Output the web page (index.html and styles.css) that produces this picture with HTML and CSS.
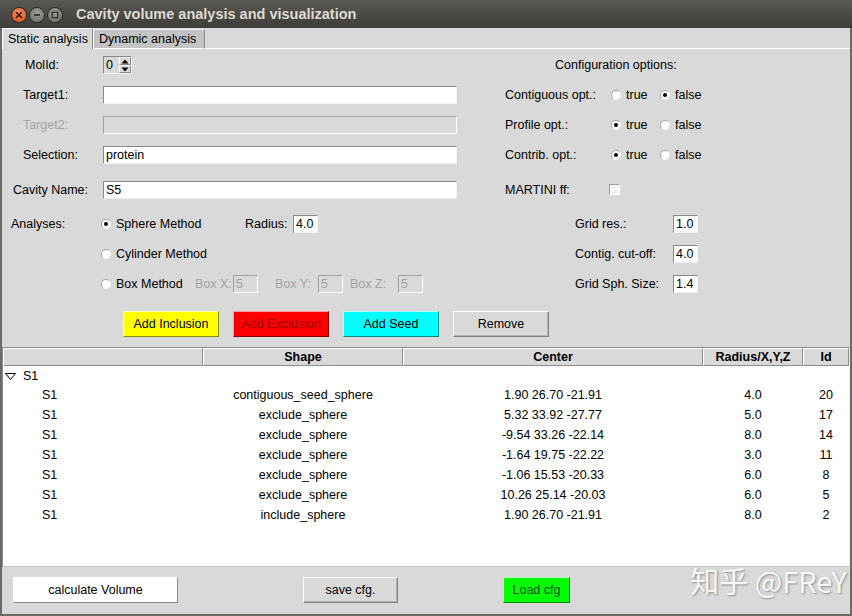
FILE: index.html
```html
<!DOCTYPE html>
<html>
<head>
<meta charset="utf-8">
<link rel="stylesheet" href="styles.css">
</head>
<body>
<div class="window">
  <div class="titlebar">
    <div class="wbtns">
      <span class="wb close"><svg width="14" height="14" viewBox="0 0 14 14"><path d="M4.6 4.6L9.4 9.4M9.4 4.6L4.6 9.4" stroke="#3a1a0c" stroke-width="1.6" stroke-linecap="round"/></svg></span>
      <span class="wb"><svg width="14" height="14" viewBox="0 0 14 14"><path d="M4 7H10" stroke="#33322e" stroke-width="1.8"/></svg></span>
      <span class="wb"><svg width="14" height="14" viewBox="0 0 14 14"><rect x="4.3" y="4.3" width="5.4" height="5.4" fill="none" stroke="#33322e" stroke-width="1.3"/></svg></span>
    </div>
    <div class="title">Cavity volume analysis and visualization</div>
  </div>
  <div class="frame">
    <div class="tabs">
      <div class="tab active">Static analysis</div>
      <div class="tab">Dynamic analysis</div>
      <div class="tab-fill"></div>
    </div>
    <div class="form">
      <div class="left">
        <div class="row"><span class="lbl lp23">MolId:</span>
          <span class="spin"><span class="spin-val">0</span><span class="spin-arrows"><span class="arr"><svg width="8" height="5" viewBox="0 0 8 5"><path d="M4 0.5L7.5 4.5H0.5Z" fill="#000"/></svg></span><span class="arr"><svg width="8" height="5" viewBox="0 0 8 5"><path d="M0.5 0.5H7.5L4 4.5Z" fill="#000"/></svg></span></span></span>
        </div>
        <div class="row"><span class="lbl lp21">Target1:</span><span class="entry wide"></span></div>
        <div class="row"><span class="lbl lp21 disabled">Target2:</span><span class="entry wide off"></span></div>
        <div class="row"><span class="lbl lp21">Selection:</span><span class="entry wide">protein</span></div>
        <div class="row tall"><span class="lbl lp11">Cavity Name:</span><span class="entry wide">S5</span></div>
        <div class="row"><span class="lbl lp9">Analyses:</span>
          <span class="radio on w144"><span class="dot"></span>Sphere Method</span>
          <span class="sublbl w48">Radius:</span><span class="entry small">4.0</span>
        </div>
        <div class="row"><span class="lbl"></span><span class="radio"><span class="dot"></span>Cylinder Method</span></div>
        <div class="row"><span class="lbl"></span>
          <span class="radio w94"><span class="dot"></span>Box Method</span>
          <span class="sublbl disabled w38">Box X:</span><span class="entry small off">5</span>
          <span class="sublbl disabled w43 ml17">Box Y:</span><span class="entry small off">5</span>
          <span class="sublbl disabled w48 ml7">Box Z:</span><span class="entry small off">5</span>
        </div>
      </div>
      <div class="right">
        <div class="row"><span class="cfg-title">Configuration options:</span></div>
        <div class="row"><span class="rlbl">Contiguous opt.:</span><span class="radio w49"><span class="dot"></span>true</span><span class="radio on"><span class="dot"></span>false</span></div>
        <div class="row"><span class="rlbl">Profile opt.:</span><span class="radio on w49"><span class="dot"></span>true</span><span class="radio"><span class="dot"></span>false</span></div>
        <div class="row"><span class="rlbl">Contrib. opt.:</span><span class="radio on w49"><span class="dot"></span>true</span><span class="radio"><span class="dot"></span>false</span></div>
        <div class="row tall"><span class="rlbl w119">MARTINI ff:</span><span class="check"></span></div>
        <div class="row"><span class="glbl">Grid res.:</span><span class="entry small">1.0</span></div>
        <div class="row"><span class="glbl">Contig. cut-off:</span><span class="entry small">4.0</span></div>
        <div class="row"><span class="glbl">Grid Sph. Size:</span><span class="entry small">1.4</span></div>
      </div>
    </div>
    <div class="actions">
      <button class="btn yellow">Add Inclusion</button>
      <button class="btn red">Add Exclusion</button>
      <button class="btn cyan">Add Seed</button>
      <button class="btn">Remove</button>
    </div>
    <div class="table">
      <div class="thead">
        <div class="th c1"></div>
        <div class="th c2">Shape</div>
        <div class="th c3">Center</div>
        <div class="th c4">Radius/X,Y,Z</div>
        <div class="th c5">Id</div>
      </div>
      <div class="tbody">
        <div class="tree-row"><svg class="tri" width="11" height="7" viewBox="0 0 11 7"><path d="M0.5 0.5H10.5L5.5 6.5Z" fill="none" stroke="#000" stroke-width="1"/></svg><span>S1</span></div>
        <div class="tr"><div class="td c1 name">S1</div><div class="td c2">contiguous_seed_sphere</div><div class="td c3">1.90 26.70 -21.91</div><div class="td c4">4.0</div><div class="td c5">20</div></div>
        <div class="tr"><div class="td c1 name">S1</div><div class="td c2">exclude_sphere</div><div class="td c3">5.32 33.92 -27.77</div><div class="td c4">5.0</div><div class="td c5">17</div></div>
        <div class="tr"><div class="td c1 name">S1</div><div class="td c2">exclude_sphere</div><div class="td c3">-9.54 33.26 -22.14</div><div class="td c4">8.0</div><div class="td c5">14</div></div>
        <div class="tr"><div class="td c1 name">S1</div><div class="td c2">exclude_sphere</div><div class="td c3">-1.64 19.75 -22.22</div><div class="td c4">3.0</div><div class="td c5">11</div></div>
        <div class="tr"><div class="td c1 name">S1</div><div class="td c2">exclude_sphere</div><div class="td c3">-1.06 15.53 -20.33</div><div class="td c4">6.0</div><div class="td c5">8</div></div>
        <div class="tr"><div class="td c1 name">S1</div><div class="td c2">exclude_sphere</div><div class="td c3">10.26 25.14 -20.03</div><div class="td c4">6.0</div><div class="td c5">5</div></div>
        <div class="tr"><div class="td c1 name">S1</div><div class="td c2">include_sphere</div><div class="td c3">1.90 26.70 -21.91</div><div class="td c4">8.0</div><div class="td c5">2</div></div>
      </div>
    </div>
    <div class="footer">
      <button class="btn white calc">calculate Volume</button>
      <button class="btn save">save cfg.</button>
      <button class="btn green load">Load cfg</button>
    </div>
  </div>
  <div class="watermark">知乎 @FReY</div>
</div>
</body>
</html>
```
FILE: styles.css
```css
* { box-sizing: border-box; }
html, body { margin: 0; padding: 0; }
body {
  width: 852px; height: 616px; overflow: hidden;
  background: #3c3b37;
  font-family: "Liberation Sans", Arial, sans-serif;
  font-size: 12.5px; color: #000;
}
.window { width: 852px; height: 616px; display: flex; flex-direction: column; position: relative; }

.titlebar {
  height: 28px; flex: none; display: flex; align-items: center;
  background: linear-gradient(#5a5954, #3e3d39);
}
.wbtns { display: flex; gap: 4px; margin-left: 12px; margin-right: 14px; margin-top: 2px; }
.wb {
  width: 14px; height: 14px; border-radius: 50%;
  background: radial-gradient(circle at 50% 35%, #9a9994, #6f6e6a);
  box-shadow: 0 0 0 1px #2e2d2a;
  display: flex;
}
.wb.close { background: radial-gradient(circle at 50% 35%, #f6915f, #dc4c18); }
.title {
  color: #dfdbd2; font-weight: bold; font-size: 14.5px;
  font-family: "Liberation Sans", Arial, sans-serif;
}

.frame {
  flex: 1; display: flex; flex-direction: column;
  background: #d9d9d9;
  border-left: 2px solid #6a6a66; border-right: 2px solid #6a6a66; border-bottom: 2px solid #6a6a66;
}

.tabs { height: 21px; display: flex; align-items: flex-end; flex: none; }
.tab {
  height: 21px; padding: 0 5px; display: flex; align-items: center; white-space: nowrap;
  border-top: 1px solid #fff; border-left: 1px solid #fff; border-right: 1px solid #8a8a8a;
}
.tab.active { width: 91px; background: #d9d9d9; }
.tab:not(.active) {
  width: 112px; height: 20px; background: #c3c3c3;
  border-top-color: #f0f0f0; border-bottom: 1px solid #fff; padding-left: 5px;
}
.tab-fill { flex: 1; border-bottom: 1px solid #fff; }

.form { display: flex; margin-top: 1px; flex: none; }
.left { width: 488px; }
.right { flex: 1; }
.row { height: 30px; display: flex; align-items: center; }
.row.tall { height: 39px; }

.lbl { width: 99px; flex: none; white-space: nowrap; }
.lp23 { padding-left: 23px; }
.lp21 { padding-left: 21px; }
.lp11 { padding-left: 11px; }
.lp9 { padding-left: 9px; }
.disabled { color: #a3a3a3; }

.entry {
  height: 18px; background: #fff; line-height: 16px; padding: 0 2px;
  border: 1px solid; border-color: #8a8a8a #f2f2f2 #f2f2f2 #8a8a8a;
  white-space: nowrap; overflow: hidden;
}
.entry.wide { width: 354px; margin-left: 2px; }
.entry.small { width: 25px; }
.entry.off { background: #d9d9d9; color: #a3a3a3; border-color: #a0a0a0 #fff #fff #a0a0a0; }

.spin {
  margin-left: 2px; width: 29px; height: 18px; display: flex;
  border: 1px solid; border-color: #8a8a8a #f2f2f2 #f2f2f2 #8a8a8a; background: #d9d9d9;
}
.spin-val { flex: 1; background: #d9d9d9; line-height: 16px; padding-left: 2px; }
.spin-arrows { width: 12px; display: flex; flex-direction: column; }
.arr {
  flex: 1; display: flex; align-items: center; justify-content: center;
  border: 1px solid; border-color: #fff #8a8a8a #8a8a8a #fff; background: #d9d9d9;
}

.radio { display: inline-flex; align-items: center; white-space: nowrap; flex: none; }
.radio .dot {
  width: 10px; height: 10px; border-radius: 50%; background: #fff; margin-right: 5px; position: relative;
  border: 1px solid; border-color: #a6a6a6 #f4f4f4 #f4f4f4 #a6a6a6;
}
.radio.on .dot::after {
  content: ""; position: absolute; left: 2px; top: 2px; width: 4px; height: 4px; border-radius: 50%; background: #000;
}
.w144 { width: 144px; }
.w94 { width: 94px; }
.w49 { width: 49px; }
.sublbl { flex: none; white-space: nowrap; }
.w48 { width: 48px; }
.w43 { width: 43px; }
.w38 { width: 38px; }
.ml17 { margin-left: 17px; }
.ml7 { margin-left: 7px; }

.cfg-title { padding-left: 65px; }
.rlbl { width: 121px; padding-left: 15px; flex: none; white-space: nowrap; }
.rlbl.w119 { width: 119px; }
.glbl { width: 183px; padding-left: 85px; flex: none; white-space: nowrap; }
.check {
  width: 11px; height: 11px; background: #f4f4f4;
  border: 1px solid; border-color: #a0a0a0 #fff #fff #a0a0a0;
}

.actions { display: flex; gap: 14px; padding-left: 121px; margin-top: 12px; flex: none; }
.btn {
  width: 96px; height: 26px; padding: 0; margin: 0;
  font-family: "Liberation Sans", Arial, sans-serif; font-size: 12.5px; color: #000;
  background: #d9d9d9;
  border: 1px solid; border-color: #fff #7f7f7f #7f7f7f #fff;
  box-shadow: inset -1px -1px 0 #b5b5b5;
}
.btn.yellow { background: #ffff00; border-color: #ffffb0 #8a8a00 #8a8a00 #ffffb0; box-shadow: none; }
.btn.red { background: #ff0000; color: #9a0000; border-color: #ff9a9a #8a0000 #8a0000 #ff9a9a; box-shadow: none; }
.btn.cyan { background: #00ffff; border-color: #b0ffff #008a8a #008a8a #b0ffff; box-shadow: none; }
.btn.green { background: #00ff00; color: #0c4d0c; border-color: #b0ffb0 #008a00 #008a00 #b0ffb0; box-shadow: none; }
.btn.white { background: #fff; border-color: #fff #8a8a8a #8a8a8a #fff; box-shadow: none; }

.table {
  margin-top: 10px; flex: none;
  border-top: 1px solid #8c8c8c; border-left: 1px solid #8c8c8c; border-right: 1px solid #f0f0f0; border-bottom: 1px solid #c4c4c4;
}
.thead { display: flex; height: 18px; background: #d9d9d9; }
.th {
  font-weight: bold; text-align: center; line-height: 16px; white-space: nowrap;
  border: 1px solid; border-color: #fff #8c8c8c #8c8c8c #fff;
}
.c1 { width: 200px; flex: none; }
.c2 { width: 200px; flex: none; }
.c3 { width: 300px; flex: none; }
.c4 { width: 100px; flex: none; }
.c5 { width: 46px; flex: none; }
.tbody { height: 200px; background: #fff; }
.tree-row { height: 19px; display: flex; align-items: center; padding-left: 2px; padding-top: 1px; }
.tri { margin-right: 7px; margin-top: 1px; }
.tr { height: 20px; display: flex; align-items: center; }
.td { text-align: center; white-space: nowrap; }
.td.name { text-align: left; padding-left: 39px; }

.footer { flex: 1; display: flex; align-items: flex-start; padding-top: 10px; padding-left: 11px; }
.calc { width: 165px; }
.save { width: 95px; margin-left: 125px; }
.load { width: 67px; margin-left: 105px; }

.watermark {
  position: absolute; right: 5px; top: 559px;
  font-family: "Noto Sans CJK SC", "Noto Sans", sans-serif; font-size: 29px;
  color: rgba(255, 255, 255, 0.92);
  text-shadow: 1px 1px 2px rgba(0, 0, 0, 0.35);
  white-space: nowrap;
}
```
